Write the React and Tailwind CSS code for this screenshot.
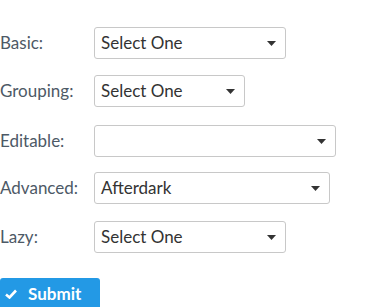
import React from "react";

const Caret = () => (
  <svg width="9" height="5" viewBox="0 0 9 5" className="shrink-0">
    <path d="M0 0 H9 L4.5 5 Z" fill="#333" />
  </svg>
);

const Dropdown = ({ value, width }) => (
  <div
    className={`flex h-[32px] items-center justify-between rounded-[3px] border border-[#c8c8c8] bg-white pl-[6px] pr-[9px] ${width}`}
  >
    <span className="text-[17px] text-[#333]">{value}</span>
    <Caret />
  </div>
);

const Row = ({ label, value, width, mt }) => (
  <div className={`flex items-center ${mt}`}>
    <label className="w-[94px] text-[17px] text-[#4d5966]">{label}</label>
    <Dropdown value={value} width={width} />
  </div>
);

export default function App() {
  return (
    <div
      className="h-[307px] w-[367px] overflow-hidden bg-white"
      style={{ fontFamily: "Lato, 'Open Sans', sans-serif" }}
    >
      <form className="flex flex-col">
        <Row label="Basic:" value="Select One" width="w-[192px]" mt="mt-[27px]" />
        <Row label="Grouping:" value="Select One" width="w-[151px]" mt="mt-[16px]" />
        <Row label="Editable:" value="" width="w-[242px]" mt="mt-[18px]" />
        <Row label="Advanced:" value="Afterdark" width="w-[236px]" mt="mt-[15px]" />
        <Row label="Lazy:" value="Select One" width="w-[192px]" mt="mt-[17px]" />
        <div className="mt-[25px]">
          <button
            type="button"
            className="flex h-[32px] w-[100px] items-center gap-[11px] rounded-[3px] bg-[#2399e5] pl-[5px] text-[17px] font-bold text-white"
          >
            <svg width="12" height="10" viewBox="0 0 12 10">
              <path d="M1 5.5 L4.5 8.5 L11 1.5" stroke="white" strokeWidth="2.6" fill="none" />
            </svg>
            Submit
          </button>
        </div>
      </form>
    </div>
  );
}
